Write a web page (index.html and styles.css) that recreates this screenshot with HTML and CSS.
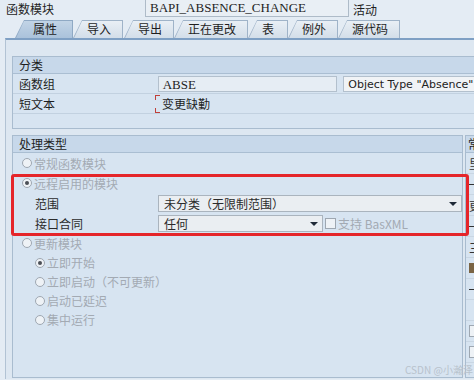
FILE: index.html
```html
<!DOCTYPE html>
<html lang="zh">
<head>
    <meta charset="UTF-8">
    <title>函数模块 BAPI_ABSENCE_CHANGE</title>
    <link rel="stylesheet" href="styles.css">
</head>
<body>
    <div class="topbar">
        <span class="top-label">函数模块</span>
        <span class="top-field">BAPI_ABSENCE_CHANGE</span>
        <span class="top-status">活动</span>
    </div>

    <div class="tabs">
        <div class="tab active"><span>属性</span></div>
        <div class="tab"><span>导入</span></div>
        <div class="tab"><span>导出</span></div>
        <div class="tab"><span>正在更改</span></div>
        <div class="tab"><span>表</span></div>
        <div class="tab"><span>例外</span></div>
        <div class="tab"><span>源代码</span></div>
    </div>

    <div class="panel">
        <section class="group group-class">
            <div class="group-head">分类</div>
            <div class="row">
                <span class="row-label">函数组</span>
                <span class="field field-group">ABSE</span>
                <span class="field field-desc">Object Type "Absence"</span>
            </div>
            <div class="row">
                <span class="row-label">短文本</span>
                <span class="field field-short">变更缺勤</span>
            </div>
        </section>

        <div class="lower">
            <section class="group group-proc">
                <div class="group-head">处理类型</div>
                <div class="opt disabled"><i class="radio"></i>常规函数模块</div>
                <div class="opt disabled"><i class="radio checked"></i>远程启用的模块</div>
                <div class="opt sub-row">
                    <span class="sub-label">范围</span>
                    <span class="select select-wide">未分类（无限制范围）<b class="arrow"></b></span>
                </div>
                <div class="opt sub-row">
                    <span class="sub-label">接口合同</span>
                    <span class="select select-short">任何<b class="arrow"></b></span>
                    <span class="check-label"><i class="check"></i>支持 BasXML</span>
                </div>
                <div class="opt disabled"><i class="radio"></i>更新模块</div>
                <div class="opt disabled small indent"><i class="radio checked"></i>立即开始</div>
                <div class="opt disabled small indent"><i class="radio"></i>立即启动（不可更新）</div>
                <div class="opt disabled small indent"><i class="radio"></i>启动已延迟</div>
                <div class="opt disabled small indent"><i class="radio"></i>集中运行</div>
                <div class="highlight"></div>
            </section>

            <section class="group group-side">
                <div class="group-head">常</div>
                <div class="side-row"><span class="side-mark">里</span></div>
                <div class="side-row"><span class="side-dash"></span></div>
                <div class="side-row"><span class="side-mark">更</span></div>
                <div class="side-row"><span class="side-dash"></span></div>
                <div class="side-row"><span class="side-mark">三</span></div>
                <div class="side-row"><span class="side-block"></span></div>
                <div class="side-row"><span class="side-dash"></span></div>
                <div class="side-row"></div>
                <div class="side-row"><i class="check"></i></div>
                <div class="side-row"><i class="check"></i></div>
            </section>
        </div>

        <div class="watermark">CSDN @小瀚泽</div>
    </div>
</body>
</html>
```

FILE: styles.css
```css
html, body {
    margin: 0;
    padding: 0;
    width: 474px;
    height: 380px;
    overflow: hidden;
}
body {
    background: #e4ecf4;
    font-family: "Noto Sans CJK SC", "Noto Sans", sans-serif;
    font-size: 12px;
    color: #1e1e1e;
}

/* top line */
.topbar {
    display: flex;
    align-items: center;
    height: 18px;
}
.top-label {
    width: 139px;
    padding-left: 6px;
    line-height: 18px;
}
.top-field {
    box-sizing: border-box;
    width: 204px;
    height: 18px;
    padding: 0 4px;
    margin-top: -2px;
    background: #e9eff5;
    border: 1px solid #aebbc8;
    border-top: none;
    font-family: "Liberation Serif", serif;
    font-size: 13px;
    line-height: 17px;
}
.top-status {
    padding-left: 4px;
}

/* tabs */
.tabs {
    display: flex;
    height: 18px;
    margin-top: 2px;
    padding-left: 15px;
}
.tab {
    position: relative;
    display: flex;
    align-items: center;
    height: 18px;
    padding: 0 12px 0 14px;
    background: #9fb3c8;
    clip-path: polygon(9px 0, 100% 0, 100% 100%, 0 100%);
}
.tab::before {
    content: '';
    position: absolute;
    top: 1px;
    left: 1px;
    right: 1px;
    bottom: 0;
    background: linear-gradient(#e9eff5, #d3dee9);
    clip-path: polygon(8px 0, 100% 0, 100% 100%, 0 100%);
}
.tab span {
    position: relative;
    line-height: 18px;
}
.tab.active {
    padding: 0 16px 0 18px;
    background: #8fa9c4;
}
.tab.active::before {
    background: linear-gradient(#c2d4e6, #aac2db);
}
.tabs .tab:nth-child(3) {
    margin-left: 1px;
}
.tabs .tab:nth-child(4) {
    padding-right: 12px;
}
.tabs .tab:nth-child(5) {
    padding-right: 14px;
}

/* main panel */
.panel {
    position: relative;
    box-sizing: border-box;
    height: 341px;
    margin-left: 5px;
    padding: 16px 0 0 6px;
    overflow: hidden;
    background: #dde7f1;
    border-top: 2px solid #7fa0c4;
    border-left: 1px solid #b2c3d4;
}
.group {
    background: #d7e4f1;
    border: 1px solid #a9bccf;
}
.group-head {
    height: 16px;
    padding-left: 6px;
    line-height: 16px;
    background: #c7d8ea;
    border-bottom: 1px solid #aabed2;
}

.group-class {
    width: 470px;
    height: 71px;
}
.row {
    display: flex;
    align-items: center;
    height: 19px;
    border-bottom: 1px solid #c2d1e0;
}
.row-label {
    width: 139px;
    padding-left: 6px;
}
.field {
    box-sizing: border-box;
    height: 16px;
    padding: 0 4px;
    line-height: 15px;
}
.field-group {
    width: 180px;
    background: #e6edf4;
    border: 1px solid #b3c0cd;
    font-family: "Liberation Serif", serif;
    font-size: 13px;
}
.field-desc {
    width: 140px;
    margin-left: 6px;
    background: #f0f3f6;
    border: 1px solid #b3c0cd;
    font-family: "DejaVu Sans", sans-serif;
    font-size: 11px;
    color: #222;
}
.field-short {
    position: relative;
    height: 18px;
    line-height: 18px;
}
.field-short::before,
.field-short::after {
    content: '';
    position: absolute;
    left: -3px;
    width: 4px;
    height: 4px;
    border-left: 1px solid #c0403a;
}
.field-short::before {
    top: 0;
    border-top: 1px solid #c0403a;
}
.field-short::after {
    bottom: 0;
    border-bottom: 1px solid #c0403a;
}

/* processing type */
.lower {
    display: flex;
    gap: 2px;
    margin-top: 6px;
}
.group-proc {
    position: relative;
    flex: 0 0 448px;
    height: 241px;
}
.opt {
    display: flex;
    align-items: center;
    height: 20px;
    padding-left: 9px;
}
.opt.small {
    height: 19px;
}
.opt.indent {
    padding-left: 22px;
}
.disabled {
    color: #a3aab3;
}
.radio {
    box-sizing: border-box;
    position: relative;
    width: 10px;
    height: 10px;
    margin-right: 2px;
    border: 1px solid #9ea7b1;
    border-radius: 50%;
    background: #eef2f6;
}
.radio.checked::after {
    content: '';
    position: absolute;
    top: 2px;
    left: 2px;
    width: 4px;
    height: 4px;
    border-radius: 50%;
    background: #4a4f56;
}
.sub-row {
    padding-left: 22px;
}
.sub-label {
    width: 123px;
    color: #2b2b2b;
}
.select {
    box-sizing: border-box;
    position: relative;
    height: 17px;
    padding-left: 5px;
    line-height: 16px;
    background: #eaeef2;
    border: 1px solid #aab4be;
    color: #2b2b2b;
}
.select-wide {
    width: 304px;
}
.select-short {
    width: 165px;
}
.arrow {
    position: absolute;
    top: 6px;
    right: 4px;
    border-left: 4px solid transparent;
    border-right: 4px solid transparent;
    border-top: 4px solid #1f2a38;
}
.check-label {
    display: flex;
    align-items: center;
    margin-left: 2px;
    color: #a3aab3;
}
.check {
    box-sizing: border-box;
    display: inline-block;
    width: 11px;
    height: 11px;
    margin-right: 2px;
    border: 1px solid #9ea7b1;
    background: #eef2f6;
}
.highlight {
    position: absolute;
    top: 38px;
    left: -2px;
    width: 452px;
    height: 56px;
    border: 3px solid #e5252a;
    border-radius: 3px;
    z-index: 5;
}

/* side column */
.group-side {
    flex: 0 0 40px;
    height: 241px;
}
.group-side .group-head {
    padding-left: 2px;
}
.side-row {
    display: flex;
    align-items: center;
    height: 20px;
    padding-left: 3px;
    border-bottom: 1px solid #c9d6e3;
}
.side-mark {
    color: #333;
}
.side-dash {
    width: 6px;
    height: 1px;
    background: #333;
}
.side-block {
    width: 5px;
    height: 10px;
    background: #7a6444;
}
.side-row .check {
    width: 12px;
    height: 12px;
}

.watermark {
    position: absolute;
    top: 324px;
    left: 399px;
    font-size: 10px;
    line-height: 12px;
    color: #b8c2cc;
}
```
